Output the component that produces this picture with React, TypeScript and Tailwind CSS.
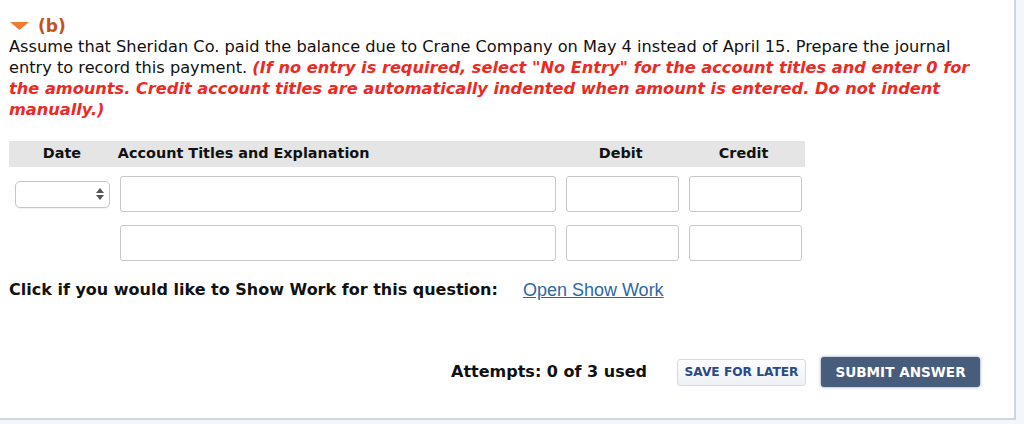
const font = { fontFamily: '"DejaVu Sans", Verdana, sans-serif' };

function Field({ w }: { w: string }) {
  return (
    <input
      type="text"
      className={`${w} h-[36px] rounded-[3px] border border-[#c8c8c8] bg-white outline-none`}
    />
  );
}

export default function App() {
  return (
    <div className="h-[424px] w-[1024px] bg-[#f3f6fa]" style={font}>
      <div className="h-[420px] w-[1016px] border-r-2 border-b-2 border-[#cdd5e3] bg-white text-[#111]">
        <div className="flex h-[20px] items-center gap-[9px] pl-[10px] pt-[26px]">
          <svg width="19" height="8" viewBox="0 0 19 8">
            <polygon points="0,0 19,0 9.5,8" fill="#f47a30" />
          </svg>
          <span className="font-bold text-[#c2521d] text-[17px] leading-[20px]">(b)</span>
        </div>
        <p className="mt-[10px] whitespace-nowrap pl-[9px] text-[16.2px] leading-[21px]">
          Assume that Sheridan Co. paid the balance due to Crane Company on May 4 instead of April 15. Prepare the journal
          <br />
          entry to record this payment.{" "}
          <span className="font-bold italic text-[#ec2a24]">
            (If no entry is required, select "No Entry" for the account titles and enter 0 for
            <br />
            the amounts. Credit account titles are automatically indented when amount is entered. Do not indent
            <br />
            manually.)
          </span>
        </p>

        <div className="ml-[9px] mt-[21px] w-[796px]">
          <div className="flex h-[26px] items-center bg-[#e5e5e5] font-bold text-[14.4px]">
            <div className="w-[106px] text-center">Date</div>
            <div className="w-[445px] pl-[3px]">Account Titles and Explanation</div>
            <div className="w-[123px] text-center">Debit</div>
            <div className="w-[123px] text-center">Credit</div>
          </div>

          <div className="mt-[9px] flex items-center">
            <div className="ml-[6px] flex h-[27px] w-[95px] items-center justify-end rounded-[5px] border border-[#c6c6c6] bg-white pr-[5px] shadow-[0_1px_1px_rgba(0,0,0,0.05)]">
              <svg width="8" height="12" viewBox="0 0 8 12">
                <polygon points="4,0 8,5 0,5" fill="#555" />
                <polygon points="0,7 8,7 4,12" fill="#555" />
              </svg>
            </div>
            <div className="ml-[10px]">
              <Field w="w-[436px]" />
            </div>
            <div className="ml-[10px]">
              <Field w="w-[113px]" />
            </div>
            <div className="ml-[10px]">
              <Field w="w-[113px]" />
            </div>
          </div>

          <div className="mt-[13px] flex items-center">
            <div className="ml-[111px]">
              <Field w="w-[436px]" />
            </div>
            <div className="ml-[10px]">
              <Field w="w-[113px]" />
            </div>
            <div className="ml-[10px]">
              <Field w="w-[113px]" />
            </div>
          </div>
        </div>

        <div className="mt-[18px] flex h-[22px] items-center pl-[9px]">
          <span className="font-bold text-[16px]">Click if you would like to Show Work for this question:</span>
          <a
            href="#"
            className="ml-[25px] text-[18px] text-[#2f67a3] underline"
            style={{ fontFamily: '"Liberation Sans", Arial, sans-serif' }}
          >
            Open Show Work
          </a>
        </div>

        <div className="mt-[56px] flex items-center justify-end pr-[34px]">
          <span className="font-bold text-[16px]">Attempts: 0 of 3 used</span>
          <button className="ml-[30px] h-[27px] w-[129px] rounded-[3px] border border-[#d4dae3] bg-gradient-to-b from-[#fdfdfe] to-[#eef1f5] text-[12.2px] font-bold text-[#2a4a85]">
            SAVE FOR LATER
          </button>
          <button className="ml-[15px] h-[30px] w-[159px] rounded-[3px] bg-[#475d7b] text-[13.6px] font-bold text-white shadow-[0_0_3px_rgba(40,60,90,0.6)]">
            SUBMIT ANSWER
          </button>
        </div>
      </div>
    </div>
  );
}
